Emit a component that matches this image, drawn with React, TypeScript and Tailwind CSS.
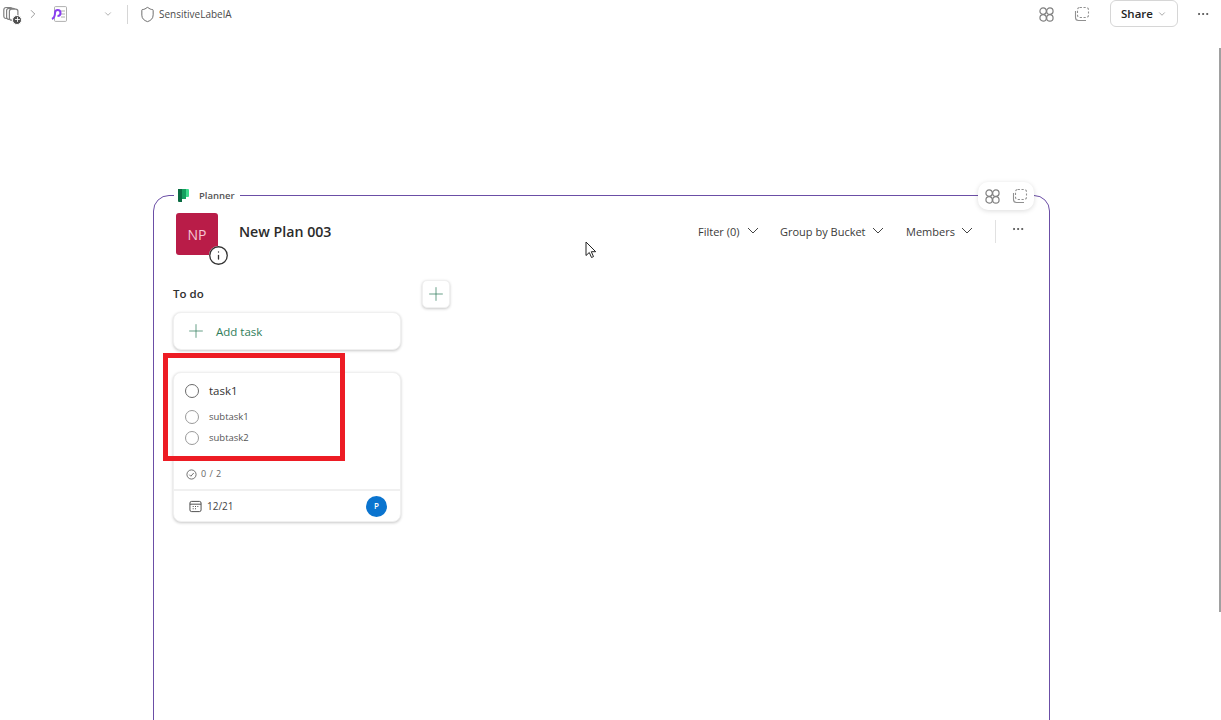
import React from 'react';
import { ChevronDown, ChevronRight, MoreHorizontal, Plus, Info, Shield } from 'lucide-react';

const CommandIcon = ({ className }: { className?: string }) => (
    <svg viewBox="0 0 16 16" className={className} fill="none" stroke="currentColor" strokeWidth="1.3">
        <circle cx="4.4" cy="4.4" r="3.4" />
        <circle cx="11.6" cy="4.4" r="3.4" />
        <circle cx="4.4" cy="11.6" r="3.4" />
        <circle cx="11.6" cy="11.6" r="3.4" />
    </svg>
);

const SelectionIcon = ({ className }: { className?: string }) => (
    <svg viewBox="0 0 16 16" className={className} fill="none" stroke="currentColor" strokeWidth="1.1">
        <rect x="3.5" y="1.5" width="11" height="10" rx="2.2" strokeDasharray="2.2 1.6" />
        <path d="M1.5 5v6.5a3 3 0 0 0 3 3h7.5" />
    </svg>
);

const Radio = ({ size }: { size: 'lg' | 'sm' }) => (
    <span className={size === 'lg'
        ? 'w-[14px] h-[14px] rounded-full border border-[#6b6b6b] shrink-0'
        : 'w-[14px] h-[14px] rounded-full border border-[#9a9a9a] shrink-0'} />
);

const ViewMenu = ({ label, width }: { label: string; width: string }) => (
    <div className={`flex items-center justify-between whitespace-nowrap ${width}`}>
        <span className="text-[11px] text-[#3b3a39] mt-[1px]">{label}</span>
        <svg viewBox="0 0 12 7" className="w-[12px] h-[7px] text-[#444] -mt-[3px]" fill="none" stroke="currentColor" strokeWidth="1">
            <path d="M1 1l5 5 5-5" />
        </svg>
    </div>
);

export default function App() {
    return (
        <div className="relative w-[1221px] h-[720px] overflow-hidden bg-white font-['Open_Sans','Noto_Sans',sans-serif] text-[#242424]">
            {/* top bar */}
            <div className="h-[28px] flex items-center pl-[3px]">
                <div className="relative w-[17px] h-[17px] text-[#808080]">
                    <svg viewBox="0 0 17 17" className="w-[17px] h-[17px]" fill="none" stroke="currentColor" strokeWidth="1.2">
                        <rect x="0.8" y="1.5" width="8.5" height="11" rx="2.2" fill="#fff" />
                        <rect x="3.6" y="2.3" width="8.5" height="11" rx="2.2" fill="#fff" />
                        <rect x="6.4" y="3.1" width="8.5" height="11" rx="2.2" fill="#fff" />
                    </svg>
                    <span className="absolute right-[-2px] bottom-[-2px] w-[10px] h-[10px] rounded-full bg-[#505050] border border-white flex items-center justify-center">
                        <Plus size={7} strokeWidth={3} className="text-white shrink-0" />
                    </span>
                </div>
                <ChevronRight size={14} strokeWidth={1.2} className="text-[#707070] ml-[6px]" />
                <svg viewBox="0 0 16 16" className="w-[16px] h-[16px] ml-[11px]">
                    <rect x="3.5" y="0.6" width="12" height="14.8" rx="1" fill="#fff" stroke="#9a9a9a" strokeWidth="0.8" />
                    <path d="M10 5h4M10 8h4M10 11h4" stroke="#a3a3a3" strokeWidth="0.9" />
                    <path d="M1 13c2-1 3-3 3-6 0-2 1-3 2.700-3C8.500 4 9.500 5.300 9.500 7S8.200 10 6.500 10" fill="none" stroke="#8a3ff0" strokeWidth="2" />
                </svg>
                <ChevronDown size={10} strokeWidth={1.3} className="text-[#707070] ml-[36px]" />
                <div className="w-px h-[19px] bg-[#d6d6d6] ml-[14px]" />
                <Shield size={17} strokeWidth={1.2} className="text-[#555] ml-[11px]" />
                <span className="text-[10px] text-[#4a4a4a] ml-[3px]">SensitiveLabelA</span>
                <div className="ml-auto flex items-center pr-[11px]">
                    <CommandIcon className="w-[15px] h-[15px] text-[#808080]" />
                    <SelectionIcon className="w-[16px] h-[16px] text-[#909090] ml-[20px]" />
                    <div className="ml-[20px] w-[68px] h-[27px] mt-[-1px] rounded-[6px] border border-[#d6d6d6] flex items-center justify-center gap-[4px]">
                        <span className="text-[11.5px] font-semibold text-[#242424]">Share</span>
                        <ChevronDown size={10} strokeWidth={1.2} className="text-[#555] mt-[1px]" />
                    </div>
                    <MoreHorizontal size={14} strokeWidth={1.6} className="text-[#444] ml-[18px]" />
                </div>
            </div>

            {/* planner frame */}
            <div className="relative ml-[153px] mt-[167px] w-[897px] h-[560px] border border-[#6b4ea6] rounded-t-[16px] pl-[22px] pr-[24px]">
                <div className="absolute left-[20px] top-[-8px] bg-white flex items-center pl-[4px] pr-[5px] h-[16px] gap-[10px]">
                    <svg viewBox="0 0 11 13" className="w-[11px] h-[13px] -mt-[1px]">
                        <path d="M0 0h4v13H1a1 1 0 0 1-1-1z" fill="#0a6b42" />
                        <path d="M4 0h4v10H4z" fill="#14a05f" />
                        <path d="M8 0h2a1 1 0 0 1 1 1v6a1 1 0 0 1-1 1H8z" fill="#3ddb8c" />
                    </svg>
                    <span className="text-[9.5px] font-semibold text-[#555]">Planner</span>
                </div>
                <div className="absolute right-[15px] top-[-14px] w-[56px] h-[28px] rounded-[10px] bg-white shadow-[0_1px_5px_rgba(0,0,0,0.14)] flex items-center justify-center gap-[12px]">
                    <CommandIcon className="w-[15px] h-[15px] text-[#808080]" />
                    <SelectionIcon className="w-[16px] h-[16px] text-[#909090]" />
                </div>

                {/* plan header */}
                <div className="flex items-start pt-[17px]">
                    <div className="relative w-[42px] h-[42px] rounded-[3px] bg-[#b91c48] flex items-center justify-center">
                        <span className="text-[14px] text-[#f5c6d4]">NP</span>
                        <span className="absolute right-[-9px] bottom-[-9px] w-[18px] h-[18px] rounded-full bg-white flex items-center justify-center">
                            <Info size={21} strokeWidth={1.5} className="text-[#333] shrink-0" />
                        </span>
                    </div>
                    <h1 className="ml-[21px] mt-[9px] text-[14.2px] leading-[20px] font-semibold text-[#2b2b2b]">New Plan 003</h1>
                    <div className="ml-auto flex items-center mt-[7px]">
                        <ViewMenu label="Filter (0)" width="w-[61px]" />
                        <div className="w-[21px]" />
                        <ViewMenu label="Group by Bucket" width="w-[104px]" />
                        <div className="w-[22px]" />
                        <ViewMenu label="Members" width="w-[67px]" />
                        <div className="w-px h-[23px] bg-[#e1e1e1] ml-[22px]" />
                        <MoreHorizontal size={14} strokeWidth={1.6} className="text-[#444] ml-[15px] -mt-[5px]" />
                    </div>
                </div>

                {/* board */}
                <div className="flex items-start mt-[27px] -ml-[3px]">
                    <div className="w-[228px]">
                        <div className="h-[24px] flex items-center text-[11.5px] font-semibold text-[#303030]">To do</div>
                        <div className="mt-[6px] h-[38px] rounded-[8px] bg-white border border-[#f0f0f0] shadow-[0_1px_3px_rgba(0,0,0,0.22)] flex items-center pl-[11px]">
                            <Plus size={22} strokeWidth={0.8} className="text-[#2f7d5a] shrink-0" />
                            <span className="ml-[9px] mt-[1px] text-[11.5px] text-[#2f7d5a]">Add task</span>
                        </div>
                        <div className="mt-[22px] h-[150px] rounded-[8px] bg-white border border-[#f0f0f0] shadow-[0_1px_3px_rgba(0,0,0,0.22)] flex flex-col">
                            <div className="flex items-center h-[16px] mt-[10px] pl-[11px]">
                                <Radio size="lg" />
                                <span className="ml-[10px] text-[11.5px] text-[#333]">task1</span>
                            </div>
                            <div className="flex items-center h-[14px] mt-[11px] pl-[11px]">
                                <Radio size="sm" />
                                <span className="ml-[10px] text-[9.5px] text-[#555]">subtask1</span>
                            </div>
                            <div className="flex items-center h-[14px] mt-[7px] pl-[11px]">
                                <Radio size="sm" />
                                <span className="ml-[10px] text-[9.5px] text-[#555]">subtask2</span>
                            </div>
                            <div className="flex items-center mt-[22px] pl-[12px] h-[14px]">
                                <svg viewBox="0 0 12 12" className="w-[11px] h-[11px] text-[#555]" fill="none" stroke="currentColor" strokeWidth="0.9">
                                    <circle cx="6" cy="6" r="5" />
                                    <path d="M3.600 6.200 5.300 7.900 8.500 4.300" />
                                </svg>
                                <span className="ml-[4px] text-[9px] text-[#666] tracking-[0.5px]">0 / 2</span>
                            </div>
                            <div className="mt-[8px] border-t-2 border-[#f0f0f0] flex-1 flex items-center pl-[15px] pr-[13px]">
                                <svg viewBox="0 0 14 14" className="w-[13px] h-[13px] text-[#444]" fill="none" stroke="currentColor" strokeWidth="1">
                                    <rect x="1" y="1.500" width="12" height="11" rx="1.800" />
                                    <path d="M1 4.500h12" />
                                    <path d="M4 7h1M6.500 7h1M9 7h1M4 9.500h1M6.500 9.500h1" strokeWidth="1.100" />
                                </svg>
                                <span className="ml-[5px] text-[10px] text-[#444]">12/21</span>
                                <span className="ml-auto w-[21px] h-[21px] rounded-full bg-[#0a74cf] flex items-center justify-center text-[8px] font-semibold text-white">P</span>
                            </div>
                        </div>
                    </div>
                    <div className="ml-[21px] mt-[-2px] w-[28px] h-[28px] rounded-[5px] bg-white border border-[#f0f0f0] shadow-[0_1px_3px_rgba(0,0,0,0.22)] flex items-center justify-center">
                        <Plus size={22} strokeWidth={0.8} className="text-[#2f7d5a] shrink-0" />
                    </div>
                </div>
            </div>

            {/* annotation box and pointer on top of the capture */}
            <div className="absolute left-[163px] top-[353px] w-[182px] h-[108px] border-[5px] border-[#ed1c24]" />
            <svg viewBox="0 0 12 18" className="absolute left-[585px] top-[241px] w-[12px] h-[18px]">
                <path d="M1 1v13.500l3.300-3 2.200 5 2-.9-2.200-4.900h4.400z" fill="#fff" stroke="#222" strokeWidth="1" />
            </svg>

            {/* scrollbar */}
            <div className="absolute right-0 top-[48px] w-[2px] h-[564px] bg-[#a0a0a0]" />
        </div>
    );
}
